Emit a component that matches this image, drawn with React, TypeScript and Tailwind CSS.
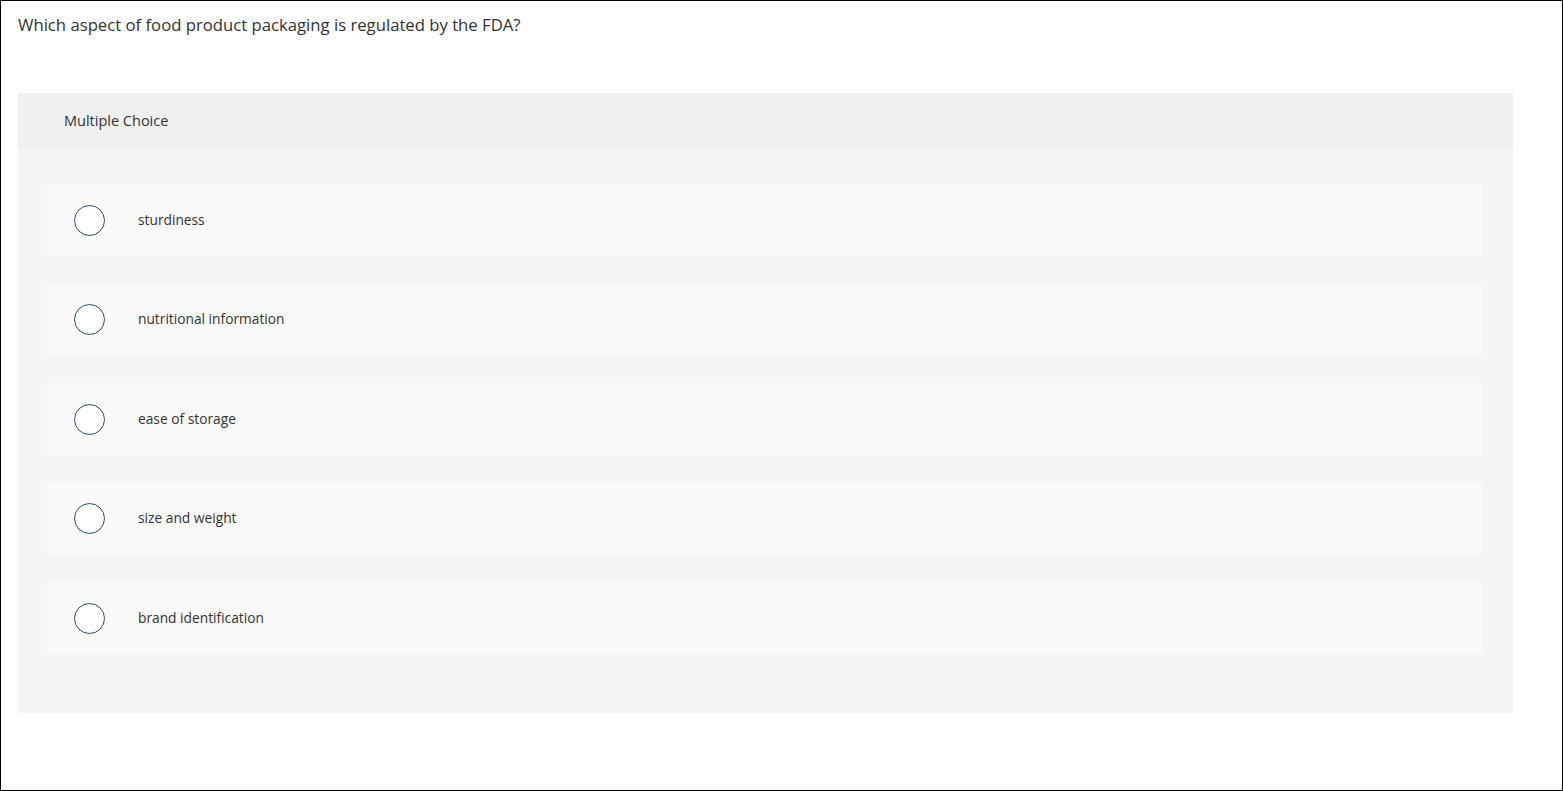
const options = [
  "sturdiness",
  "nutritional information",
  "ease of storage",
  "size and weight",
  "brand identification",
];

export default function App() {
  return (
    <div
      className="w-[1563px] h-[791px] border border-black bg-white text-[#333]"
      style={{ fontFamily: "'Open Sans', Lato, sans-serif" }}
    >
      <div className="pl-[17px] pt-[12px] text-[16.7px] leading-[24px]">
        Which aspect of food product packaging is regulated by the FDA?
      </div>

      <div className="ml-[17px] mt-[56px] w-[1495px] bg-[#f5f5f5] pb-[59px]">
        <div className="h-[55px] bg-[#f0f0f0] pl-[46px] flex items-center text-[14.5px]">
          Multiple Choice
        </div>
        <div className="pt-[36px] pl-[29px] pr-[31px] flex flex-col gap-[27.5px]">
          {options.map((o) => (
            <div
              key={o}
              className="h-[72px] bg-[#fafafa] flex items-center pl-[27px]"
            >
              <div className="w-[31px] h-[31px] rounded-full border border-[#2d4f70] bg-white shrink-0" />
              <div className="ml-[33px] text-[13.75px]">{o}</div>
            </div>
          ))}
        </div>
      </div>
    </div>
  );
}
